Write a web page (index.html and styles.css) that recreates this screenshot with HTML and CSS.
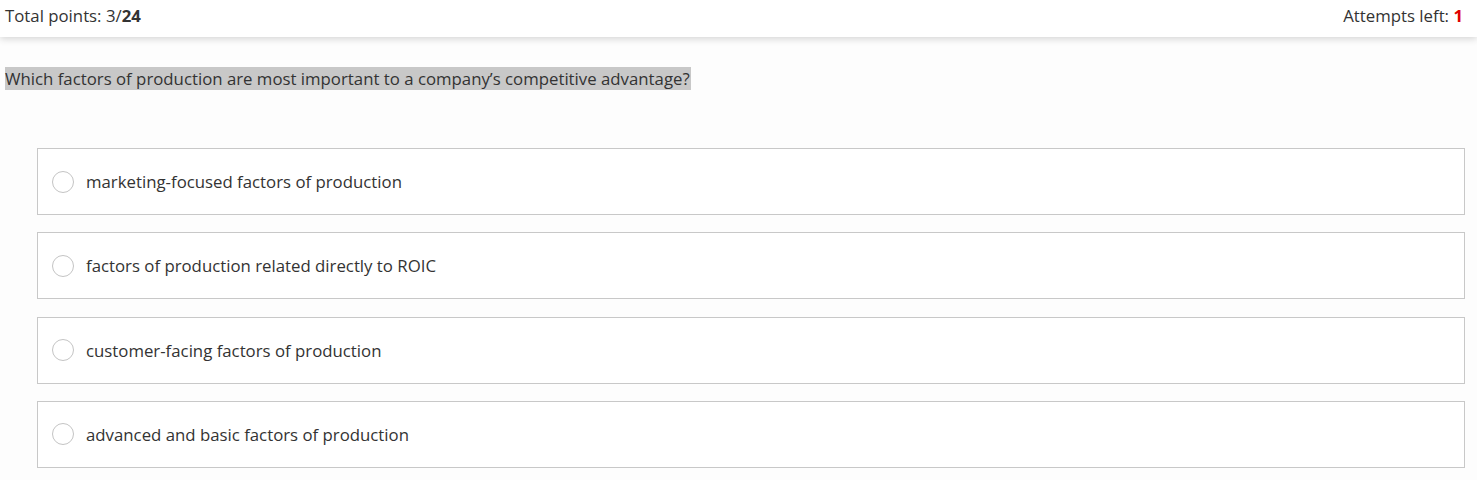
FILE: index.html
```html
<!DOCTYPE html>
<html>
<head>
<meta charset="utf-8">
<link rel="stylesheet" href="styles.css">
</head>
<body>
<div class="header">
  <div class="points">Total points: 3/<b>24</b></div>
  <div class="attempts">Attempts left: <b class="red">1</b></div>
</div>
<div class="content">
  <div class="question"><span class="hl">Which factors of production are most important to a company’s competitive advantage?</span></div>
  <div class="options">
    <div class="option"><span class="radio"></span><span class="label">marketing-focused factors of production</span></div>
    <div class="option"><span class="radio"></span><span class="label">factors of production related directly to ROIC</span></div>
    <div class="option"><span class="radio"></span><span class="label">customer-facing factors of production</span></div>
    <div class="option"><span class="radio"></span><span class="label">advanced and basic factors of production</span></div>
  </div>
</div>
</body>
</html>
```

FILE: styles.css
```css
html, body {
  margin: 0;
  padding: 0;
  background: #fdfdfd;
  font-family: "Open Sans", "Noto Sans", sans-serif;
  color: #333;
}
.header {
  height: 37px;
  box-sizing: border-box;
  background: #fff;
  display: flex;
  justify-content: space-between;
  align-items: flex-start;
  padding: 4px 14px 0 5px;
  font-size: 16.8px;
  line-height: 24px;
  box-shadow: 0 2px 7px rgba(0,0,0,0.16);
  position: relative;
}
.header b { font-weight: 700; }
.red { color: #e00000; }
.content {
  padding: 29px 12px 0 5px;
}
.question {
  font-size: 16.8px;
  line-height: 25px;
}
.hl {
  background: #c8c8c8;
  padding: 0 1px 0 0;
}
.options {
  margin: 57px 0 0 32px;
  display: flex;
  flex-direction: column;
  gap: 17.3px;
}
.option {
  height: 65px;
  border: 1px solid #c8c8c8;
  background: #fff;
  display: flex;
  align-items: center;
  padding-left: 14px;
  font-size: 16.8px;
}
.radio {
  width: 20px;
  height: 20px;
  border: 1px solid #c4c4c4;
  border-radius: 50%;
  background: #fff;
  flex: none;
}
.label {
  margin-left: 12px;
}
```
